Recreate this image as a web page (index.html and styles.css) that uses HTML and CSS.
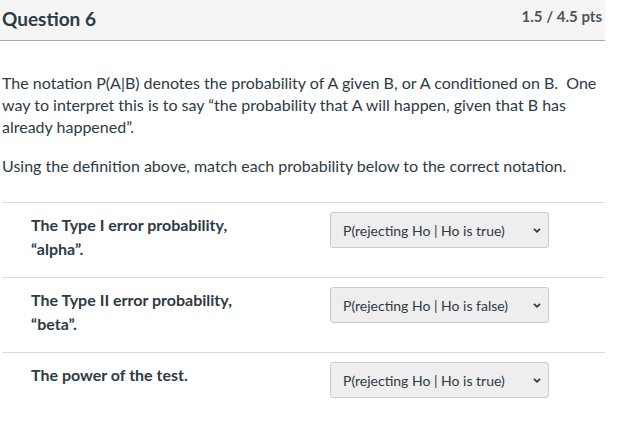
FILE: index.html
```html
<!DOCTYPE html>
<html lang="en">
<head>
    <meta charset="UTF-8">
    <title>Question 6</title>
    <link rel="stylesheet" href="styles.css">
</head>
<body>
    <div class="question">
        <div class="header">
            <span class="title">Question 6</span>
            <span class="points">1.5 / 4.5 pts</span>
        </div>
        <div class="text">
            <p>The notation P(A|B) denotes the probability of A given B, or A conditioned on B.&nbsp; One way to interpret this is to say “the probability that A will happen, given that B has already happened”.</p>
            <p>Using the definition above, match each probability below to the correct notation.</p>
        </div>
        <div class="answers">
            <div class="answer">
                <div class="label">The Type I error probability, “alpha”.</div>
                <div class="select">
                    <span>P(rejecting Ho | Ho is true)</span>
                    <svg class="chevron" width="10" height="7" viewBox="0 0 10 7"><path d="M2 1.8 L5 4.8 L8 1.8" fill="none" stroke="#2d3b45" stroke-width="1.8"/></svg>
                </div>
            </div>
            <div class="answer">
                <div class="label">The Type II error probability, “beta”.</div>
                <div class="select">
                    <span>P(rejecting Ho | Ho is false)</span>
                    <svg class="chevron" width="10" height="7" viewBox="0 0 10 7"><path d="M2 1.8 L5 4.8 L8 1.8" fill="none" stroke="#2d3b45" stroke-width="1.8"/></svg>
                </div>
            </div>
            <div class="answer">
                <div class="label">The power of the test.</div>
                <div class="select">
                    <span>P(rejecting Ho | Ho is true)</span>
                    <svg class="chevron" width="10" height="7" viewBox="0 0 10 7"><path d="M2 1.8 L5 4.8 L8 1.8" fill="none" stroke="#2d3b45" stroke-width="1.8"/></svg>
                </div>
            </div>
        </div>
    </div>
</body>
</html>
```

FILE: styles.css
```css
body {
    margin: 0;
    font-family: Lato, "Open Sans", sans-serif;
    color: #2d3b45;
    background: #fff;
}
.question {
    width: 605px;
}
.header {
    display: flex;
    justify-content: space-between;
    align-items: center;
    height: 37px;
    padding: 0 3px 3px 2px;
    background: #f5f5f5;
    border-bottom: 1px solid #a8a8a8;
}
.title {
    font-size: 19px;
    font-weight: bold;
}
.points {
    font-size: 15px;
    font-weight: bold;
    color: #4a555e;
    margin-top: -6px;
}
.text {
    padding: 31px 2px 0;
    font-size: 16px;
    line-height: 22px;
}
.text p {
    margin: 0 0 17px;
}
.text p:last-child {
    margin-bottom: 0;
}
.answers {
    margin: 25px 0 0 2px;
}
.answer {
    display: flex;
    align-items: flex-start;
    height: 65px;
    border-top: 1px solid #dcdcdc;
    padding: 9px 0 0 29px;
}
.label {
    width: 220px;
    padding-top: 1px;
    font-size: 16px;
    font-weight: bold;
    line-height: 24px;
}
.select {
    display: flex;
    align-items: center;
    justify-content: space-between;
    width: 199px;
    height: 34px;
    margin-left: 79px;
    padding: 0 6px 0 12px;
    background: #eeeeee;
    border: 1px solid #c7cdd1;
    border-radius: 3px;
    font-size: 14px;
}
```
